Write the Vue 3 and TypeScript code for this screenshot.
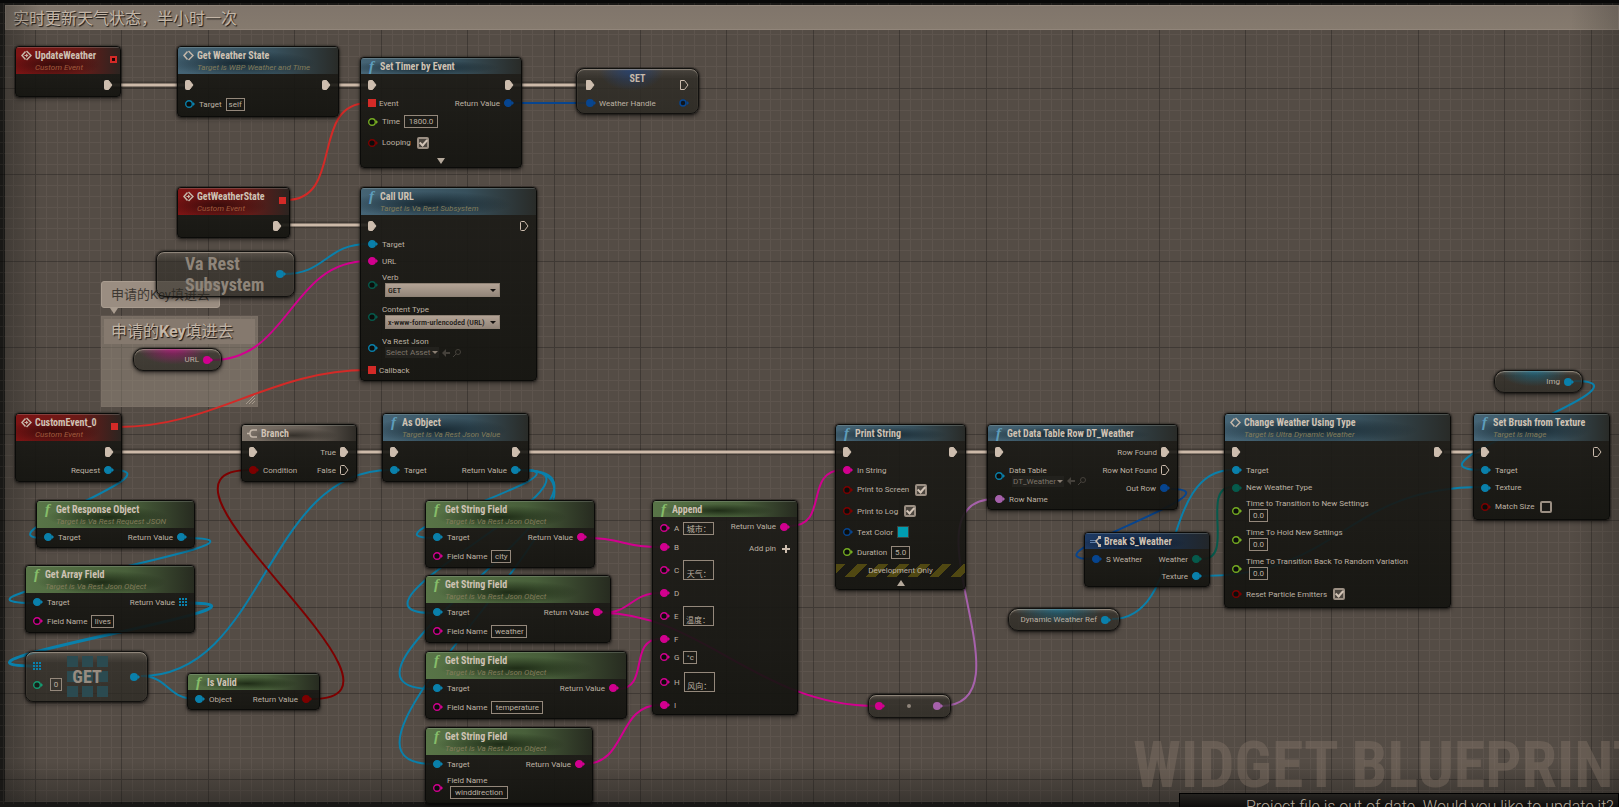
<script setup lang="ts">
import { reactive } from 'vue'

type Kind = 'exec' | 'dot' | 'square' | 'array' | 'plus'
type Field = 'text' | 'area' | 'check' | 'select' | 'asset' | 'swatch'

interface Pin {
  kind: Kind
  h: number
  color?: string
  on?: boolean
  label?: string
  field?: Field
  value?: string
  checked?: boolean
  w?: number
  stack?: boolean
}

interface GraphNode {
  id: string
  x: number
  y: number
  w: number
  tone: 'red' | 'blue' | 'green' | 'grey' | 'navy'
  icon: 'event' | 'fn' | 'branch' | 'break'
  title: string
  sub?: string
  delegate?: 'on' | 'off'
  left: Pin[]
  right: Pin[]
  strip?: string
  expand?: 'up' | 'down'
}

const C = {
  obj: '#0a80ab',
  str: '#d2008f',
  bool: '#7d0000',
  float: '#76ac22',
  struct: '#07458f',
  enm: '#065a4c',
  int: '#149a70',
  name: '#a661ab',
  red: '#d32a27',
  exec: '#cdbdae',
}

const exec = (on = true, label?: string): Pin => ({ kind: 'exec', h: 18, on, label })
const dot = (color: string, label: string, h = 18, on = true): Pin => ({ kind: 'dot', color, label, h, on })
const hollow = (color: string, label: string, h: number, field?: Field, value?: string, w?: number): Pin => ({
  kind: 'dot', color, label, h, on: false, field, value, w,
})
const stacked = (color: string, label: string, h: number, field: Field, value: string, w: number): Pin => ({
  kind: 'dot', color, label, h, on: false, field, value, w, stack: true,
})
const check = (label: string, h: number, checked: boolean): Pin => ({
  kind: 'dot', color: C.bool, label, h, on: false, field: 'check', checked,
})

const stringField = (id: string, y: number, w: number, value: string, fieldWidth: number, stack = false): GraphNode => ({
  id, x: 425, y, w, tone: 'green', icon: 'fn', title: 'Get String Field', sub: 'Target is Va Rest Json Object',
  left: [
    dot(C.obj, 'Target'),
    stack ? stacked(C.str, 'Field Name', 29, 'text', value, fieldWidth) : hollow(C.str, 'Field Name', 20, 'text', value, fieldWidth),
  ],
  right: [dot(C.str, 'Return Value')],
})

const nodes = reactive<GraphNode[]>([
  { id: 'update', x: 15, y: 46, w: 106, tone: 'red', icon: 'event', title: 'UpdateWeather', sub: 'Custom Event', delegate: 'off', left: [], right: [exec()] },
  {
    id: 'getstate', x: 177, y: 46, w: 162, tone: 'blue', icon: 'event', title: 'Get Weather State', sub: 'Target is WBP Weather and Time',
    left: [exec(), hollow(C.obj, 'Target', 20, 'text', 'self', 19)], right: [exec()],
  },
  {
    id: 'timer', x: 360, y: 57, w: 162, tone: 'blue', icon: 'fn', title: 'Set Timer by Event', expand: 'down',
    left: [exec(), { kind: 'square', color: C.red, label: 'Event', h: 18 }, hollow(C.float, 'Time', 19, 'text', '1800.0', 34), check('Looping', 23, true)],
    right: [exec(), dot(C.struct, 'Return Value')],
  },
  { id: 'event2', x: 177, y: 187, w: 113, tone: 'red', icon: 'event', title: 'GetWeatherState', sub: 'Custom Event', delegate: 'on', left: [], right: [exec()] },
  {
    id: 'callurl', x: 360, y: 187, w: 177, tone: 'blue', icon: 'fn', title: 'Call URL', sub: 'Target is Va Rest Subsystem',
    left: [
      exec(), dot(C.obj, 'Target'), dot(C.str, 'URL', 16),
      stacked(C.enm, 'Verb', 32, 'select', 'GET', 115),
      stacked(C.enm, 'Content Type', 32, 'select', 'x-www-form-urlencoded (URL)', 115),
      stacked(C.obj, 'Va Rest Json', 29, 'asset', 'Select Asset', 54),
      { kind: 'square', color: C.red, label: 'Callback', h: 16 },
    ],
    right: [exec(false)],
  },
  { id: 'custom0', x: 15, y: 413, w: 107, tone: 'red', icon: 'event', title: 'CustomEvent_0', sub: 'Custom Event', delegate: 'on', left: [], right: [exec(), dot(C.obj, 'Request')] },
  {
    id: 'branch', x: 241, y: 424, w: 116, tone: 'grey', icon: 'branch', title: 'Branch',
    left: [exec(), dot(C.bool, 'Condition')], right: [exec(true, 'True'), exec(false, 'False')],
  },
  {
    id: 'asobject', x: 382, y: 413, w: 147, tone: 'blue', icon: 'fn', title: 'As Object', sub: 'Target is Va Rest Json Value',
    left: [exec(), dot(C.obj, 'Target')], right: [exec(), dot(C.obj, 'Return Value')],
  },
  {
    id: 'print', x: 835, y: 424, w: 131, tone: 'blue', icon: 'fn', title: 'Print String', strip: 'Development Only', expand: 'up',
    left: [
      exec(), dot(C.str, 'In String'), check('Print to Screen', 21, true), check('Print to Log', 22, true),
      hollow(C.struct, 'Text Color', 20, 'swatch', '#009db1'), hollow(C.float, 'Duration', 20, 'text', '5.0', 19),
    ],
    right: [exec()],
  },
  {
    id: 'table', x: 987, y: 424, w: 191, tone: 'blue', icon: 'fn', title: 'Get Data Table Row DT_Weather',
    left: [exec(), stacked(C.obj, 'Data Table', 30, 'asset', 'DT_Weather', 52), dot(C.name, 'Row Name', 16)],
    right: [exec(true, 'Row Found'), exec(false, 'Row Not Found'), dot(C.struct, 'Out Row')],
  },
  {
    id: 'break', x: 1084, y: 532, w: 126, tone: 'navy', icon: 'break', title: 'Break S_Weather',
    left: [dot(C.struct, 'S Weather', 16)], right: [dot(C.enm, 'Weather', 16), dot(C.obj, 'Texture')],
  },
  {
    id: 'change', x: 1224, y: 413, w: 227, tone: 'blue', icon: 'event', title: 'Change Weather Using Type', sub: 'Target is Ultra Dynamic Weather',
    left: [
      exec(), dot(C.obj, 'Target'), dot(C.enm, 'New Weather Type', 17),
      stacked(C.float, 'Time to Transition to New Settings', 29, 'text', '0.0', 19),
      stacked(C.float, 'Time To Hold New Settings', 29, 'text', '0.0', 19),
      stacked(C.float, 'Time To Transition Back To Random Variation', 29, 'text', '0.0', 19),
      check('Reset Particle Emitters', 22, true),
    ],
    right: [exec()],
  },
  {
    id: 'brush', x: 1473, y: 413, w: 137, tone: 'blue', icon: 'fn', title: 'Set Brush from Texture', sub: 'Target is Image',
    left: [exec(), dot(C.obj, 'Target'), dot(C.obj, 'Texture', 17), check('Match Size', 21, false)],
    right: [exec(false)],
  },
  {
    id: 'response', x: 36, y: 500, w: 159, tone: 'green', icon: 'fn', title: 'Get Response Object', sub: 'Target is Va Rest Request JSON',
    left: [dot(C.obj, 'Target')], right: [dot(C.obj, 'Return Value')],
  },
  {
    id: 'array', x: 25, y: 565, w: 170, tone: 'green', icon: 'fn', title: 'Get Array Field', sub: 'Target is Va Rest Json Object',
    left: [dot(C.obj, 'Target'), hollow(C.str, 'Field Name', 20, 'text', 'lives', 23)],
    right: [{ kind: 'array', color: C.obj, label: 'Return Value', h: 18 }],
  },
  {
    id: 'valid', x: 187, y: 673, w: 133, tone: 'green', icon: 'fn', title: 'Is Valid',
    left: [dot(C.obj, 'Object')], right: [dot(C.bool, 'Return Value')],
  },
  stringField('gs1', 500, 170, 'city', 20),
  stringField('gs2', 575, 186, 'weather', 36),
  stringField('gs3', 651, 202, 'temperature', 52),
  stringField('gs4', 727, 168, 'winddirection', 58, true),
  {
    id: 'append', x: 652, y: 500, w: 146, tone: 'green', icon: 'fn', title: 'Append',
    left: [
      hollow(C.str, 'A', 22, 'text', '城市：', 31), dot(C.str, 'B', 16),
      hollow(C.str, 'C', 30, 'area', '\n天气：', 31), dot(C.str, 'D', 16),
      hollow(C.str, 'E', 30, 'area', '\n温度：', 31), dot(C.str, 'F', 16),
      hollow(C.str, 'G', 20, 'text', '°c', 14), hollow(C.str, 'H', 30, 'area', '\n风向：', 31), dot(C.str, 'I', 16),
    ],
    right: [dot(C.str, 'Return Value', 19), { kind: 'plus', label: 'Add pin', h: 25 }],
  },
])

const variables = [
  { id: 'v-url', x: 133, y: 348, w: 89, label: 'URL', color: C.str },
  { id: 'v-dyn', x: 1008, y: 608, w: 112, label: 'Dynamic Weather Ref', color: C.obj },
  { id: 'v-img', x: 1494, y: 370, w: 89, label: 'Img', color: C.obj },
]

const execWires = [
  'M113 85H185', 'M331 85H368', 'M513 85H586', 'M282 225H368', 'M113 452H250',
  'M349 452H390', 'M520 452H843', 'M958 452H995', 'M1168 452H1232', 'M1444 452H1482',
]

const wires = [
  { d: 'M286 200C345 200 309 103 368 103', c: C.red },
  { d: 'M118 427C215 427 270 370 368 370', c: C.red },
  { d: 'M284 274C326 274 326 244 368 244', c: C.obj },
  { d: 'M212 360C290 360 290 261 368 261', c: C.str },
  { d: 'M510 103H586', c: C.struct },
  { d: 'M112 470C184 470 -24 538 44 538', c: C.obj },
  { d: 'M184 538C316 538 -98 603 37 603', c: C.obj },
  { d: 'M187 603C314 603 -98 666 37 666', c: C.obj, w: 3 },
  { d: 'M141 676C168 676 168 699 195 699', c: C.obj },
  { d: 'M141 676C265 676 265 470 390 470', c: C.obj },
  { d: 'M312 699C442 699 118 470 250 470', c: C.bool },
  { d: 'M521 470C600 470 353 538 433 538', c: C.obj },
  { d: 'M521 470C636 470 318 613 433 613', c: C.obj },
  { d: 'M521 470C665 470 289 689 433 689', c: C.obj },
  { d: 'M521 470C665 470 289 764 433 764', c: C.obj },
  { d: 'M586 538C625 538 620 547 660 547', c: C.str },
  { d: 'M602 613C631 613 631 593 660 593', c: C.str },
  { d: 'M602 613C700 613 760 706 876 706', c: C.str },
  { d: 'M618 689C650 689 628 639 660 639', c: C.str },
  { d: 'M584 764C628 764 616 705 660 705', c: C.str },
  { d: 'M790 526C830 526 803 470 843 470', c: C.str },
  { d: 'M941 706C1036 706 898 499 995 499', c: C.name },
  { d: 'M1171 489C1246 489 1016 559 1092 559', c: C.struct },
  { d: 'M1203 559C1235 559 1200 487 1232 487', c: C.enm },
  { d: 'M1203 576C1340 576 1345 487 1482 487', c: C.obj },
  { d: 'M1112 619C1185 619 1159 470 1232 470', c: C.obj },
  { d: 'M1574 381C1670 381 1386 470 1482 470', c: C.obj },
]

const gridPath = (origin: number, length: number, vertical: boolean, major: boolean): string => {
  const step = 86.43 / 8
  let d = ''
  for (let i = -8; origin + i * step < length; i++) {
    if ((i % 8 === 0) !== major) continue
    const p = Math.floor(origin + i * step)
    d += vertical ? `M${p} 0h1v2000h-1z` : `M0 ${p}h3200v1h-3200z`
  }
  return d
}
const minor = gridPath(35.5, 3200, true, false) + gridPath(2, 2000, false, false)
const major = gridPath(35.5, 3200, true, true) + gridPath(2, 2000, false, true)

const px = (n: number) => `${n}px`
</script>

<template>
  <main class="canvas">
    <section class="frame"></section>
    <svg class="layer" aria-hidden="true">
      <path :d="minor" class="grid-minor" />
      <path :d="major" class="grid-major" />
    </svg>
    <header class="frame-title">实时更新天气状态，半小时一次</header>
    <div class="vignette"></div>
    <div class="watermark">WIDGET BLUEPRINT</div>

    <div class="bubble">申请的Key填进去</div>
    <section class="note">
      <h2>申请的<b>Key</b>填进去</h2>
      <svg class="grip" viewBox="0 0 10 10" aria-hidden="true"><path d="M0 9L9 0M3 9L9 3M6 9L9 6" /></svg>
    </section>

    <svg class="layer" aria-hidden="true">
      <g class="wire-exec">
        <path v-for="d in execWires" :key="d" :d="d" class="halo" />
        <path v-for="d in execWires" :key="d + 'c'" :d="d" />
      </g>
      <path v-for="w in wires" :key="w.d" :d="w.d" class="wire" :stroke="w.c" :stroke-width="w.w ?? 2" />
    </svg>

    <article
      v-for="n in nodes" :key="n.id" class="node" :class="['tone-' + n.tone]"
      :style="{ left: px(n.x), top: px(n.y), width: px(n.w) }"
    >
      <header class="head" :class="{ tall: n.sub }">
        <span class="head-icon">
          <i v-if="n.icon === 'fn'" class="fn">f</i>
          <svg v-else-if="n.icon === 'event'" width="11" height="11" viewBox="0 0 11 11">
            <path d="M4.500 1.500L1 5.500L4.500 9.500M5.500 1L10 5.500L5.500 10" class="icon-line" />
            <path v-if="n.tone === 'red'" d="M3.500 5H5V3.500L7.500 5.500L5 7.500V6H3.500Z" class="icon-fill" />
          </svg>
          <svg v-else-if="n.icon === 'branch'" width="11" height="11" viewBox="0 0 11 11">
            <path d="M0 5.500H3M10 2H6Q3 2 3 5.500T6 9H10" class="icon-line" />
          </svg>
          <svg v-else width="11" height="11" viewBox="0 0 11 11">
            <path d="M0 4.500H6M0 6.500H6" class="icon-soft" />
            <path d="M10 1L6 5L10 10" class="icon-line" />
            <path d="M8 0H11V3H8ZM8 8H11V11H8Z" class="icon-fill" />
          </svg>
        </span>
        <div class="names">
          <h3>{{ n.title }}</h3>
          <p v-if="n.sub">{{ n.sub }}</p>
        </div>
        <span v-if="n.delegate" class="delegate" :class="n.delegate"></span>
      </header>
      <div class="body">
        <div v-for="(side, s) in [n.left, n.right]" :key="s" class="pins" :class="{ out: s === 1 }">
          <div v-for="(p, i) in side" :key="i" class="pin" :class="p.kind" :style="{ height: px(p.h) }">
            <svg v-if="p.kind === 'exec'" width="9" height="10" viewBox="0 0 9 10">
              <path d="M1.500 0.500H4.500L8 5L4.500 9.500H1.500Q0.500 9.500 0.500 8.500V1.500Q0.500 0.500 1.500 0.500Z" :fill="p.on ? C.exec : 'none'" :stroke="C.exec" />
            </svg>
            <svg v-else-if="p.kind === 'dot'" width="10" height="8" viewBox="0 0 10 8">
              <circle cx="4" cy="4" r="3.300" :fill="p.on ? p.color : '#0b0d0b'" :stroke="p.color" stroke-width="1.400" />
              <path d="M8 2L10 4L8 6Z" :fill="p.color" />
            </svg>
            <svg v-else-if="p.kind === 'array'" width="8" height="8" viewBox="0 0 8 8">
              <path d="M0 0h2v2h-2zM3 0h2v2h-2zM6 0h2v2h-2zM0 3h2v2h-2zM3 3h2v2h-2zM6 3h2v2h-2zM0 6h2v2h-2zM3 6h2v2h-2zM6 6h2v2h-2z" :fill="p.color" />
            </svg>
            <span v-else-if="p.kind === 'square'" class="mark"></span>
            <button v-if="p.kind === 'plus'" type="button" class="add">
              {{ p.label }}
              <svg width="8" height="8" viewBox="0 0 8 8"><path d="M3 0H5V3H8V5H5V8H3V5H0V3H3Z" :fill="C.exec" /></svg>
            </button>
            <span v-else-if="p.label && !p.field" class="label">{{ p.label }}</span>
            <div v-else-if="p.field" class="entry" :class="{ stack: p.stack }">
              <label class="label" :for="n.id + i">{{ p.label }}</label>
              <input v-if="p.field === 'text'" :id="n.id + i" v-model="p.value" type="text" class="text" :style="{ width: px(p.w ?? 20) }" />
              <textarea v-else-if="p.field === 'area'" :id="n.id + i" v-model="p.value" class="text area" :style="{ width: px(p.w ?? 20) }"></textarea>
              <input v-else-if="p.field === 'check'" :id="n.id + i" v-model="p.checked" type="checkbox" class="check" />
              <button v-else-if="p.field === 'swatch'" :id="n.id + i" type="button" class="swatch" aria-label="Text Color" :style="{ background: p.value }"></button>
              <span v-else class="picker" :class="p.field">
                <span class="drop">
                  <select :id="n.id + i" v-model="p.value" :style="{ width: px(p.w ?? 50) }"><option>{{ p.value }}</option></select>
                </span>
                <template v-if="p.field === 'asset'">
                  <svg width="8" height="8" viewBox="0 0 8 8"><path d="M0 4L4 0V3H8V5H4V8Z" fill="#45413b" /></svg>
                  <svg width="8" height="8" viewBox="0 0 8 8"><path d="M0 8L3 5" stroke="#45413b" /><circle cx="5" cy="3" r="2.500" fill="none" stroke="#45413b" /></svg>
                </template>
              </span>
            </div>
          </div>
        </div>
      </div>
      <div v-if="n.strip" class="strip">{{ n.strip }}</div>
      <div v-if="n.expand" class="expand" :class="n.expand"><svg width="8" height="6" viewBox="0 0 8 6"><path d="M0 0H8L4 6Z" /></svg></div>
    </article>

    <article class="glass set">
      <h3>SET</h3>
      <div class="set-row">
        <svg width="9" height="10" viewBox="0 0 9 10"><path d="M0.500 0.500H4.500L8 5L4.500 9.500H0.500Z" :fill="C.exec" :stroke="C.exec" /></svg>
        <svg width="9" height="10" viewBox="0 0 9 10"><path d="M0.500 0.500H4.500L8 5L4.500 9.500H0.500Z" fill="none" :stroke="C.exec" /></svg>
      </div>
      <div class="set-row">
        <span class="pair">
          <svg width="10" height="8" viewBox="0 0 10 8"><circle cx="4" cy="4" r="4" :fill="C.struct" /><path d="M8 2L10 4L8 6Z" :fill="C.struct" /></svg>
          <span class="label">Weather Handle</span>
        </span>
        <svg width="10" height="8" viewBox="0 0 10 8"><circle cx="4" cy="4" r="3" fill="#10151c" :stroke="C.struct" stroke-width="1.500" /><path d="M8 2L10 4L8 6Z" :fill="C.struct" /></svg>
      </div>
    </article>

    <article class="glass subsystem">
      <h3>Va Rest<br />Subsystem</h3>
      <svg width="10" height="8" viewBox="0 0 10 8"><circle cx="4" cy="4" r="4" :fill="C.obj" /><path d="M8 2L10 4L8 6Z" :fill="C.obj" /></svg>
    </article>

    <article class="glass get">
      <div class="get-in">
        <svg width="8" height="8" viewBox="0 0 8 8">
          <path d="M0 0h2v2h-2zM3 0h2v2h-2zM6 0h2v2h-2zM0 3h2v2h-2zM3 3h2v2h-2zM6 3h2v2h-2zM0 6h2v2h-2zM3 6h2v2h-2zM6 6h2v2h-2z" :fill="C.obj" />
        </svg>
        <span class="pair">
          <svg width="10" height="8" viewBox="0 0 10 8"><circle cx="4" cy="4" r="3.300" fill="#14201a" :stroke="C.int" stroke-width="1.400" /><path d="M8 2L10 4L8 6Z" :fill="C.int" /></svg>
          <input class="text index" type="text" value="0" aria-label="Index" />
        </span>
      </div>
      <div class="tiles">
        <span v-for="t in 9" :key="t"></span>
        <h3>GET</h3>
      </div>
      <svg width="10" height="8" viewBox="0 0 10 8"><circle cx="4" cy="4" r="4" :fill="C.obj" /><path d="M8 2L10 4L8 6Z" :fill="C.obj" /></svg>
    </article>

    <article class="glass convert">
      <svg width="10" height="8" viewBox="0 0 10 8"><circle cx="4" cy="4" r="4" :fill="C.str" /><path d="M8 2L10 4L8 6Z" :fill="C.str" /></svg>
      <span class="bead"></span>
      <svg width="10" height="8" viewBox="0 0 10 8"><circle cx="4" cy="4" r="4" :fill="C.name" /><path d="M8 2L10 4L8 6Z" :fill="C.name" /></svg>
    </article>

    <article
      v-for="v in variables" :key="v.id" class="glass variable"
      :style="{ left: px(v.x), top: px(v.y), width: px(v.w), '--glow': v.color }"
    >
      <span class="label">{{ v.label }}</span>
      <svg width="10" height="8" viewBox="0 0 10 8"><circle cx="4" cy="4" r="4" :fill="v.color" /><path d="M8 2L10 4L8 6Z" :fill="v.color" /></svg>
    </article>

    <aside class="toast">
      <svg width="8" height="6" viewBox="0 0 8 6" aria-hidden="true"><path d="M4 0L8 6H0Z" /></svg>
      <p>Project file is out of date. Would you like to update it?</p>
    </aside>
  </main>
</template>

<style>
body {
  margin: 0;
  background: #0f0e0d;
}
</style>

<style scoped>
.canvas {
  position: relative;
  height: 100vh;
  overflow: hidden;
  background: #191816;
  border-top: 3px solid #080808;
  box-sizing: border-box;
  font-family: Roboto, "Noto Sans CJK SC", sans-serif;
  font-size: 8px;
  line-height: 11px;
  color: #bdb1a3;
}
.canvas > * {
  margin-top: -3px;
}
h2, h3, p {
  margin: 0;
}
svg {
  display: block;
  flex: none;
}
.layer {
  position: absolute;
  top: 0;
  left: 0;
  width: 100%;
  height: 100%;
}
.frame {
  position: absolute;
  inset: 5px 0 5px 5px;
  background: #544c45;
}
.grid-minor {
  fill: rgba(255, 235, 215, 0.055);
}
.grid-major {
  fill: rgba(0, 0, 0, 0.24);
}
.vignette {
  position: absolute;
  inset: 5px 0 5px 5px;
  background:
    linear-gradient(to right, rgba(20, 20, 18, 0.3), transparent 36px),
    linear-gradient(to left, rgba(20, 20, 18, 0.2), transparent 48px),
    linear-gradient(to top, rgba(20, 20, 18, 0.4), transparent 40px);
}
.frame-title {
  position: absolute;
  inset: 5px 0 auto 5px;
  height: 25px;
  padding-left: 7px;
  box-sizing: border-box;
  border: 1px solid #91857a;
  background: linear-gradient(#80756b, #857a6e);
  color: #c3b5a6;
  font-size: 16px;
  line-height: 25px;
  text-shadow: 1px 1px 1px #181512;
}
.watermark {
  position: absolute;
  left: 1133px;
  top: 726px;
  font-family: "Roboto Condensed", Roboto, sans-serif;
  font-weight: 700;
  font-size: 64px;
  line-height: 80px;
  white-space: nowrap;
  color: rgba(140, 126, 112, 0.36);
}
.bubble {
  position: absolute;
  left: 101px;
  top: 281px;
  height: 27px;
  padding: 0 9px;
  box-sizing: border-box;
  border: 1px solid #a99c8f;
  border-radius: 3px;
  background: #9a8d81;
  color: #3d3832;
  font-size: 13px;
  line-height: 25px;
}
.bubble::after {
  content: "";
  position: absolute;
  left: 8px;
  top: 26px;
  border: 4px solid transparent;
  border-top: 6px solid #a99c8f;
  border-bottom: 0;
}
.note {
  position: absolute;
  left: 101px;
  top: 316px;
  width: 157px;
  height: 91px;
  padding: 2px;
  box-sizing: border-box;
  border: 1px solid #7a6f65;
  background: rgba(160, 148, 134, 0.45);
}
.note h2 {
  height: 25px;
  padding-left: 7px;
  background: #85796e;
  color: #c3b5a6;
  font-size: 16px;
  font-weight: 400;
  line-height: 25px;
  text-shadow: 1px 1px 1px #181512;
}
.grip {
  position: absolute;
  right: 1px;
  bottom: 1px;
  width: 10px;
  height: 10px;
  fill: none;
  stroke: #a5998c;
}
.wire {
  fill: none;
}
.wire-exec path {
  stroke: #cdbaa9;
  stroke-width: 3;
}
.wire-exec .halo {
  stroke: rgba(20, 16, 12, 0.3);
  stroke-width: 7;
}

.node {
  position: absolute;
  box-sizing: border-box;
  overflow: hidden;
  padding-bottom: 1px;
  border: 1px solid #0b0b09;
  border-radius: 4px;
  background: linear-gradient(rgba(28, 27, 23, 0.9), rgba(19, 19, 15, 0.92));
  box-shadow: 0 2px 4px rgba(0, 0, 0, 0.5), 0 0 2px #000;
}
.head {
  display: flex;
  height: 16px;
  padding-left: 5px;
  box-sizing: border-box;
  box-shadow: inset 0 1px 0 rgba(200, 210, 200, 0.22);
}
.head.tall {
  height: 27px;
}
.tone-red .head {
  background: radial-gradient(ellipse at 35% 65%, rgba(20, 4, 4, 0.6), transparent 50%), linear-gradient(to right, #7d1414, #6b1a17 60%, #2c2420);
}
.tone-blue .head {
  background: radial-gradient(ellipse at 38% 60%, rgba(12, 26, 34, 0.75), transparent 55%), linear-gradient(to right, #456475, #37505c 60%, #292b28);
}
.tone-green .head {
  background: radial-gradient(ellipse at 45% 60%, rgba(16, 26, 10, 0.75), transparent 50%), linear-gradient(to right, #587447, #485f3a 60%, #272b20);
}
.tone-grey .head {
  background: radial-gradient(ellipse at 45% 65%, rgba(24, 22, 18, 0.65), transparent 50%), linear-gradient(to right, #7e746a, #625a52 65%, #2f2c27);
}
.tone-navy .head {
  background: radial-gradient(ellipse at 38% 65%, rgba(4, 10, 26, 0.6), transparent 50%), linear-gradient(to right, #1d3962, #19304e 55%, #22262a);
}
.head-icon {
  width: 14px;
  padding-top: 3px;
  flex: none;
}
.fn {
  display: block;
  padding-left: 3px;
  font: italic 700 15px/11px "Liberation Serif", serif;
  color: #5e9dbb;
}
.tone-green .fn {
  color: #86bd6a;
}
.icon-line {
  fill: none;
  stroke: #c4b7a9;
  stroke-width: 1.500;
}
.icon-soft {
  fill: none;
  stroke: #5f7ea8;
}
.icon-fill {
  fill: #c4b7a9;
}
.names {
  flex: 1;
  padding-top: 2px;
  white-space: nowrap;
}
.node h3 {
  font-family: "Roboto Condensed", Roboto, sans-serif;
  font-size: 10px;
  font-weight: 700;
  line-height: 13px;
  color: #cfc2b4;
}
.names p {
  font-style: italic;
  line-height: 11px;
  color: #827c5a;
}
.tone-red .names p {
  color: #a05c3e;
}
.delegate {
  width: 7px;
  height: 7px;
  margin: 9px 3px 0 0;
  box-sizing: border-box;
  border: 2px solid #d32a27;
  background: #1c0606;
}
.delegate.on {
  background: #d32a27;
}
.body {
  display: flex;
  justify-content: space-between;
  padding: 2px 7px 1px;
}
.tone-green .body {
  padding: 0 7px;
}
.tone-navy .body {
  padding-bottom: 0;
}
.pin {
  display: flex;
  align-items: center;
  gap: 4px;
}
.pin.square {
  gap: 3px;
}
.out .pin {
  flex-direction: row-reverse;
}
.label {
  white-space: nowrap;
}
.mark {
  width: 8px;
  height: 8px;
  background: #d32a27;
}
.entry {
  display: flex;
  align-items: center;
  gap: 4px;
}
.entry.stack {
  flex-direction: column;
  align-items: flex-start;
  gap: 0;
  padding-bottom: 1px;
}
.stack .text, .stack .picker {
  margin-left: 3px;
}
.text {
  height: 13px;
  padding: 0;
  box-sizing: border-box;
  border: 1px solid #94887b;
  border-radius: 0;
  background: transparent;
  color: #bdb1a3;
  font: inherit;
  text-align: center;
}
.area {
  height: 20px;
  overflow: hidden;
  resize: none;
  line-height: 9px;
}
.check {
  position: relative;
  width: 12px;
  height: 12px;
  margin: 0 0 0 2px;
  appearance: none;
  border: 2px solid #9b8f83;
  border-radius: 2px;
  background: #1b1a17;
}
.check:checked {
  background: #4c463f;
}
.check:checked::after {
  content: "";
  position: absolute;
  left: 2px;
  top: -1px;
  width: 3px;
  height: 6px;
  border: solid #d0c2b4;
  border-width: 0 2px 2px 0;
  transform: rotate(42deg);
}
.swatch {
  width: 12px;
  height: 12px;
  padding: 0;
  border: 1px solid #3a4440;
}
.picker {
  display: flex;
  align-items: center;
  gap: 3px;
}
.drop {
  position: relative;
  display: flex;
}
.drop::after {
  content: "";
  position: absolute;
  right: 4px;
  top: 6px;
  border: 3px solid transparent;
  border-top-color: #14110f;
  border-bottom: 0;
  pointer-events: none;
}
.drop select {
  height: 14px;
  padding: 0 0 0 2px;
  appearance: none;
  border: 1px solid #8f8275;
  border-radius: 0;
  background: linear-gradient(#b3a395, #93867a);
  color: #1c1916;
  font: 500 8px "Roboto Condensed", Roboto, sans-serif;
}
.asset .drop select {
  height: 11px;
  padding-left: 1px;
  border: 0;
  background: #22211d;
  color: #7d7469;
  font: inherit;
}
.asset .drop::after {
  top: 4px;
  right: 1px;
  border-top-color: #8a7f73;
}
.add {
  display: flex;
  align-items: center;
  gap: 6px;
  padding: 0;
  border: 0;
  background: none;
  color: inherit;
  font: inherit;
}
.strip {
  height: 13px;
  margin-top: 1px;
  background: repeating-linear-gradient(135deg, #504812 0 7px, transparent 7px 15px);
  line-height: 13px;
  text-align: center;
}
.expand {
  display: flex;
  align-items: center;
  justify-content: center;
  height: 11px;
  fill: #b5a99b;
}
.expand.up svg {
  transform: rotate(180deg);
}

.glass {
  position: absolute;
  display: flex;
  align-items: center;
  box-sizing: border-box;
  border: 1px solid #12110f;
  border-radius: 8px;
  background: linear-gradient(rgba(90, 84, 76, 0.75), rgba(48, 45, 39, 0.75) 22%, rgba(42, 40, 34, 0.75));
  box-shadow: inset 0 1px 1px rgba(190, 178, 164, 0.6), 0 2px 4px rgba(0, 0, 0, 0.55), 0 0 2px #000;
}
.set {
  left: 576px;
  top: 68px;
  width: 123px;
  flex-direction: column;
  align-items: stretch;
  padding: 7px 9px 1px;
  background: radial-gradient(ellipse at 45% 0, rgba(34, 66, 120, 0.8), transparent 35%), linear-gradient(rgba(70, 66, 60, 0.85), rgba(48, 45, 39, 0.85) 22%, rgba(42, 40, 34, 0.85));
}
.set h3 {
  position: absolute;
  inset: 3px 0 auto;
  font-family: "Roboto Condensed", Roboto, sans-serif;
  font-size: 10px;
  line-height: 13px;
  text-align: center;
  color: #c6b9ab;
}
.set-row {
  display: flex;
  align-items: center;
  justify-content: space-between;
  height: 18px;
}
.pair {
  display: flex;
  align-items: center;
  gap: 3px;
}
.subsystem {
  left: 156px;
  top: 251px;
  width: 139px;
  height: 46px;
  justify-content: space-between;
  padding: 0 8px 0 28px;
  background: linear-gradient(rgba(90, 84, 76, 0.6), rgba(48, 45, 39, 0.6) 22%, rgba(42, 40, 34, 0.6));
}
.subsystem h3, .get h3 {
  font-family: "Roboto Condensed", Roboto, sans-serif;
  font-size: 18px;
  font-weight: 700;
  line-height: 21px;
  color: #8f857a;
}
.get {
  left: 25px;
  top: 651px;
  width: 123px;
  height: 51px;
  justify-content: space-between;
  padding: 0 7px;
}
.get-in {
  display: flex;
  flex-direction: column;
  gap: 8px;
}
.get-in .pair {
  gap: 7px;
}
.index {
  width: 12px;
}
.tiles {
  position: relative;
  display: grid;
  grid-template-columns: repeat(3, 11px);
  gap: 4px;
  margin-right: 18px;
}
.tiles span {
  height: 11px;
  background: #2b4a50;
}
.get h3 {
  position: absolute;
  inset: 10px 0 auto;
  text-align: center;
  color: #978c80;
}
.convert {
  left: 868px;
  top: 694px;
  width: 83px;
  height: 24px;
  justify-content: space-between;
  padding: 0 7px 0 6px;
}
.bead {
  width: 4px;
  height: 4px;
  border-radius: 2px;
  background: #8f857a;
}
.variable {
  height: 23px;
  justify-content: flex-end;
  gap: 4px;
  padding: 0 8px 0 0;
  border-radius: 10px;
}
.variable::before {
  content: "";
  position: absolute;
  inset: 0;
  border-radius: 10px;
  background: radial-gradient(ellipse at 45% 0, var(--glow), transparent 52%);
  opacity: 0.55;
}
.variable > * {
  position: relative;
}
.toast {
  position: absolute;
  left: 1179px;
  right: 0;
  top: 793px;
  display: flex;
  align-items: center;
  gap: 25px;
  height: 48px;
  padding: 0 0 0 33px;
  box-sizing: border-box;
  border: 1px solid #000;
  background: linear-gradient(#252320, #0d0c0b 14px);
}
.toast svg {
  fill: #050505;
}
.toast p {
  align-self: flex-start;
  padding-top: 4px;
  font-size: 16px;
  font-weight: 300;
  line-height: 18px;
  white-space: nowrap;
  color: #b5a99b;
}
</style>
